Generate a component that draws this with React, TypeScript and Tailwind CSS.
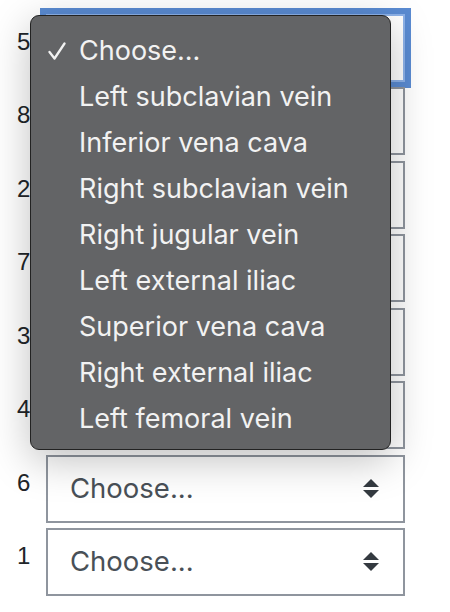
const rows = ['5', '8', '2', '7', '3', '4', '6', '1'];

const options = [
  'Choose...',
  'Left subclavian vein',
  'Inferior vena cava',
  'Right subclavian vein',
  'Right jugular vein',
  'Left external iliac',
  'Superior vena cava',
  'Right external iliac',
  'Left femoral vein',
];

function Arrows() {
  return (
    <svg width="16" height="20" viewBox="0 0 16 20" className="shrink-0">
      <path d="M8 0 L16 8 L0 8 Z" fill="#343a40" />
      <path d="M0 11 L16 11 L8 19 Z" fill="#343a40" />
    </svg>
  );
}

function Check() {
  return (
    <svg width="18" height="18" viewBox="0 0 18 18">
      <path d="M1.5 10 L6.5 16.5 L16.5 1.5" fill="none" stroke="#f2f2f2" strokeWidth="2.3" strokeLinecap="round" strokeLinejoin="round" />
    </svg>
  );
}

export default function App() {
  return (
    <div className="relative w-[450px] h-[612px] bg-white overflow-hidden" style={{ fontFamily: 'Inter, "Noto Sans", sans-serif' }}>
      <div className="flex flex-col gap-[5.5px] pt-[13.5px]">
        {rows.map((n, i) => (
          <div key={n} className="flex items-start">
            <div className="w-[46px] pl-[17px] pt-[16px] text-[24px] leading-[24px] text-[#212529]" style={{ fontFamily: '"Liberation Sans", Arial, sans-serif' }}>
              {n}
            </div>
            <div
              className={
                i === 0
                  ? 'flex items-center justify-between w-[359px] h-[68px] border-2 border-[#8db2e9] shadow-[0_0_0_6px_#5a8bd2] pl-[22px] pr-[24px] bg-white'
                  : 'flex items-center justify-between w-[359px] h-[68px] border-2 border-[#8f959e] pl-[22px] pr-[24px] bg-white'
              }
            >
              <span className="text-[27.5px] text-[#495057]">Choose...</span>
              <Arrows />
            </div>
          </div>
        ))}
      </div>

      <div className="absolute left-[30px] top-[15px] w-[361px] h-[435px] rounded-[9px] border border-[#222] bg-[#636466] pt-[12px] pb-[8px] shadow-[0_10px_40px_rgba(0,0,0,0.25)]">
        {options.map((o, i) => (
          <div key={o} className="flex items-center h-[46px] text-[27px] text-[#f2f2f2]">
            <span className="w-[48px] flex pl-[17px]">{i === 0 ? <Check /> : null}</span>
            <span>{o}</span>
          </div>
        ))}
      </div>
    </div>
  );
}
